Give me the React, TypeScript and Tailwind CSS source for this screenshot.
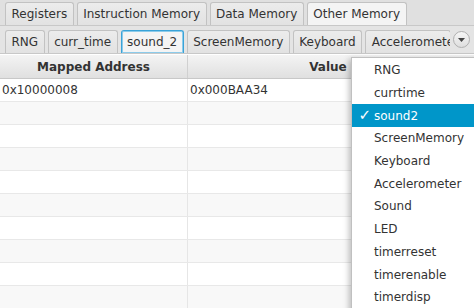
import React from "react";

const font = { fontFamily: '"DejaVu Sans", Verdana, sans-serif' };

function Tab({ label, selected, focused }: { label: string; selected?: boolean; focused?: boolean }) {
  return (
    <div
      className={
        "h-[23px] px-[5.5px] flex items-center rounded-t-[3px] border border-b-0 text-[12px] leading-none whitespace-nowrap " +
        (focused
          ? "border-[#3aa3d8] bg-[#f4f4f4] text-[#333333] shadow-[inset_0_0_0_1px_#8ccbea]"
          : selected
          ? "border-[#c2c2c2] bg-[#f4f4f4] text-[#333333]"
          : "border-[#c2c2c2] bg-gradient-to-b from-[#ececec] to-[#e2e2e2] text-[#333333]")
      }
    >
      {label}
    </div>
  );
}

const menuItems = [
  "RNG",
  "currtime",
  "sound2",
  "ScreenMemory",
  "Keyboard",
  "Accelerometer",
  "Sound",
  "LED",
  "timerreset",
  "timerenable",
  "timerdisp",
];

export default function App() {
  const rows = Array.from({ length: 10 });
  return (
    <div className="relative w-[474px] h-[308px] overflow-hidden bg-white text-[#333333]" style={font}>
      {/* Top tab row */}
      <div className="h-[26px] bg-[#e0e0e0] border-b border-[#c8c8c8] flex items-end gap-[3px] pl-[5px]">
        <Tab label="Registers" />
        <Tab label="Instruction Memory" />
        <Tab label="Data Memory" />
        <Tab label="Other Memory" selected />
      </div>
      {/* Second tab row */}
      <div className="h-[28px] bg-[#e4e4e4] border-b border-[#c8c8c8] flex items-end pl-[5px] pr-[4px]">
        <div className="flex-1 flex items-end gap-[3px] overflow-hidden">
          <Tab label="RNG" />
          <Tab label="curr_time" />
          <Tab label="sound_2" focused />
          <Tab label="ScreenMemory" />
          <Tab label="Keyboard" />
          <div className="w-[86px] shrink-0 overflow-hidden">
            <Tab label="Accelerometer" />
          </div>
        </div>
        <div className="self-center ml-[3px] w-[17px] h-[17px] rounded-full border border-[#b0b0b0] bg-gradient-to-b from-[#f6f6f6] to-[#dedede] flex items-center justify-center">
          <svg width="9" height="6" viewBox="0 0 9 6">
            <path d="M1 1 L4.5 5 L8 1 Z" fill="#444" />
          </svg>
        </div>
      </div>
      {/* Table */}
      <div className="mt-[1px]">
        <div className="h-[24px] flex border-b border-[#c8c8c8] bg-gradient-to-b from-[#f4f4f4] to-[#e0e0e0] text-[12px] font-bold text-[#333333]">
          <div className="w-[188px] flex items-center justify-center border-r border-[#d0d0d0]">Mapped Address</div>
          <div className="flex-1 flex items-center justify-center pr-[6px]">Value</div>
        </div>
        {rows.map((_, i) => (
          <div
            key={i}
            className={
              "h-[23px] flex border-b border-[#e8e8e8] text-[12px] " + (i % 2 === 0 ? "bg-white" : "bg-[#f8f8f8]")
            }
          >
            <div className="w-[188px] flex items-center pl-[2px] border-r border-[#e6e6e6]">
              {i === 0 ? "0x10000008" : ""}
            </div>
            <div className="flex-1 flex items-center pl-[2px]">{i === 0 ? "0x000BAA34" : ""}</div>
          </div>
        ))}
      </div>
      {/* Popup menu */}
      <div className="absolute left-[351px] top-[57px] w-[130px] h-[260px] bg-white border border-[#c0c0c0] shadow-[-2px_2px_6px_rgba(0,0,0,0.25)] pt-[1px]">
        {menuItems.map((m) => {
          const sel = m === "sound2";
          return (
            <div
              key={m}
              className={
                "h-[22.7px] flex items-center text-[12px] " +
                (sel ? "bg-[#0096c9] text-white" : "text-[#333333]")
              }
            >
              <span className="w-[22px] flex justify-end pr-[3px] text-[15px] leading-none">{sel ? "✓" : ""}</span>
              <span>{m}</span>
            </div>
          );
        })}
      </div>
    </div>
  );
}
